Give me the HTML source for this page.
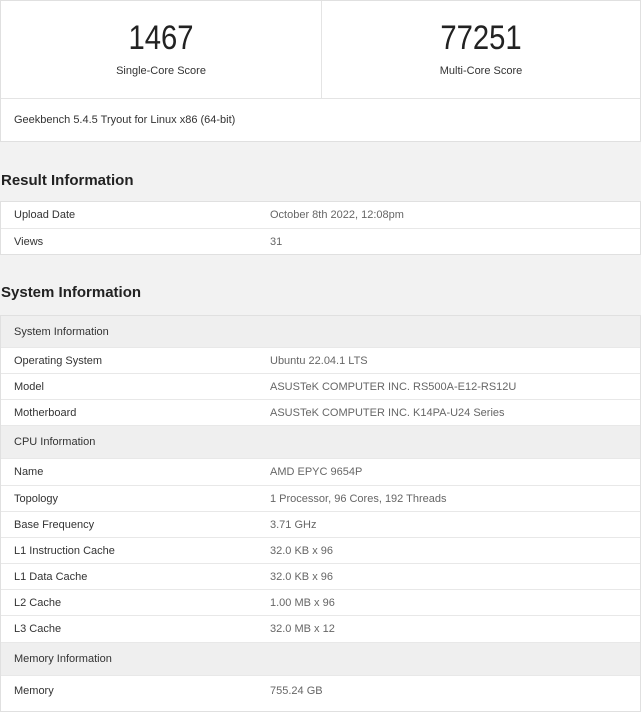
<!DOCTYPE html>
<html><head><style>
body{margin:0;width:641px;height:704px;overflow:hidden;background:#f2f2f2;font-family:"Liberation Sans",Arial,sans-serif;color:#333;position:relative}
.card{position:absolute;left:0;width:639px;background:#fff;border:1px solid #e0e0e0}
.num{position:absolute;width:320px;text-align:center;top:18px;font-size:34px;color:#222;transform:scaleX(0.86)}
.lbl{position:absolute;width:320px;text-align:center;top:64px;font-size:11px;color:#333}
h2{position:absolute;left:1px;margin:0;font-size:15px;font-weight:bold;color:#222}
.r{position:absolute;left:0;width:639px;border-top:1px solid #e8e8e8;font-size:11px;box-sizing:border-box}
.r span{position:absolute;top:50%;transform:translateY(-50%)}
.r .k{left:13px;color:#333}.r .v{left:269px;color:#666}
.h{background:#efefef}
</style></head><body>
<div class="card" style="top:0;height:140px">
<div style="position:absolute;left:320px;top:0;width:1px;height:97px;background:#e4e4e4"></div>
<div style="position:absolute;left:0;top:97px;width:639px;height:1px;background:#e4e4e4"></div>
<div class="num" style="left:0">1467</div><div class="lbl" style="left:0">Single-Core Score</div>
<div class="num" style="left:320px">77251</div><div class="lbl" style="left:320px">Multi-Core Score</div>
<div style="position:absolute;left:13px;top:113px;font-size:11px">Geekbench 5.4.5 Tryout for Linux x86 (64-bit)</div>
</div>
<h2 style="top:172px">Result Information</h2>
<div class="card" style="top:201px;height:52px">
<div class="r" style="top:0;height:26px;border-top:0"><span class="k">Upload Date</span><span class="v">October 8th 2022, 12:08pm</span></div>
<div class="r" style="top:26px;height:26px"><span class="k">Views</span><span class="v">31</span></div>
</div>
<h2 style="top:284px">System Information</h2>
<div class="card" style="top:315px;height:395px">
<div class="r h" style="top:0;height:31px;border-top:0"><span class="k">System Information</span></div>
<div class="r" style="top:31px;height:26px"><span class="k">Operating System</span><span class="v">Ubuntu 22.04.1 LTS</span></div>
<div class="r" style="top:57px;height:26px"><span class="k">Model</span><span class="v">ASUSTeK COMPUTER INC. RS500A-E12-RS12U</span></div>
<div class="r" style="top:83px;height:26px"><span class="k">Motherboard</span><span class="v">ASUSTeK COMPUTER INC. K14PA-U24 Series</span></div>
<div class="r h" style="top:109px;height:33px"><span class="k">CPU Information</span></div>
<div class="r" style="top:142px;height:27px"><span class="k">Name</span><span class="v">AMD EPYC 9654P</span></div>
<div class="r" style="top:169px;height:26px"><span class="k">Topology</span><span class="v">1 Processor, 96 Cores, 192 Threads</span></div>
<div class="r" style="top:195px;height:26px"><span class="k">Base Frequency</span><span class="v">3.71 GHz</span></div>
<div class="r" style="top:221px;height:26px"><span class="k">L1 Instruction Cache</span><span class="v">32.0 KB x 96</span></div>
<div class="r" style="top:247px;height:26px"><span class="k">L1 Data Cache</span><span class="v">32.0 KB x 96</span></div>
<div class="r" style="top:273px;height:26px"><span class="k">L2 Cache</span><span class="v">1.00 MB x 96</span></div>
<div class="r" style="top:299px;height:27px"><span class="k">L3 Cache</span><span class="v">32.0 MB x 12</span></div>
<div class="r h" style="top:326px;height:33px"><span class="k">Memory Information</span></div>
<div class="r" style="top:359px;height:31px"><span class="k">Memory</span><span class="v">755.24 GB</span></div>
</div>
</body></html>
